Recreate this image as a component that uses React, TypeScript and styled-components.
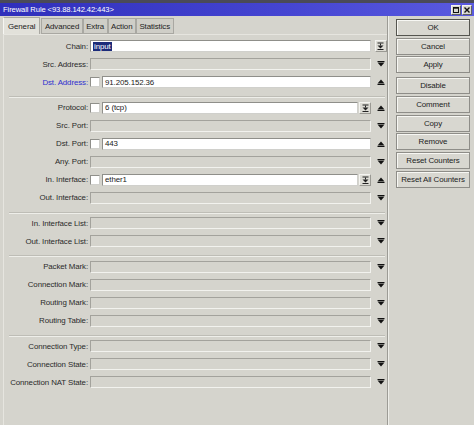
import React from "react";
import styled, { createGlobalStyle } from "styled-components";

const GlobalStyle = createGlobalStyle`
  html, body {
    margin: 0;
    padding: 0;
    background: #d5d4cd;
  }
  * { box-sizing: border-box; }
`;

const Window = styled.div`
  width: 474px;
  height: 425px;
  background: #d5d4cd;
  font-family: "Liberation Sans", Arial, sans-serif;
  font-size: 7.9px;
  letter-spacing: -0.1px;
  color: #222;
  display: flex;
  flex-direction: column;
  overflow: hidden;
`;

const TitleBar = styled.div`
  height: 16px;
  border-top: 3px solid #4a4a58;
  background: linear-gradient(to right, #2f2fbb, #4545d2 60%, #5a5ae0);
  display: flex;
  align-items: center;
  padding: 0 2px 0 3px;
`;

const TitleText = styled.div`
  color: #fff;
  font-size: 7.6px;
  flex: 1;
  white-space: nowrap;
`;

const TitleButtons = styled.div`
  display: flex;
  gap: 1px;
`;

const TitleBtn = styled.div`
  width: 10px;
  height: 10px;
  background: #d8d7d0;
  border: 1px solid #f4f4f0;
  border-right-color: #606060;
  border-bottom-color: #606060;
  display: flex;
  align-items: center;
  justify-content: center;
`;

const Body = styled.div`
  flex: 1;
  display: flex;
`;

const Main = styled.div`
  width: 387px;
  display: flex;
  flex-direction: column;
  padding: 1px 0 0 3px;
`;

const TabBar = styled.div`
  display: flex;
  height: 17px;
  align-items: flex-end;
`;

const Tab = styled.div<{ $active?: boolean }>`
  height: ${(p) => (p.$active ? "17px" : "16px")};
  padding: 0 ${(p) => (p.$active ? "4px" : "2.5px")};
  display: flex;
  align-items: center;
  background: ${(p) => (p.$active ? "#e2e1da" : "#cfcec7")};
  border: 1px solid #a9a8a2;
  border-bottom: ${(p) => (p.$active ? "none" : "1px solid #a9a8a2")};
  border-left-color: ${(p) => (p.$active ? "#f6f6f2" : "#a9a8a2")};
  margin-right: ${(p) => (p.$active ? "1px" : "0")};
  white-space: nowrap;
`;

const Panel = styled.div`
  flex: 1;
  border-left: 1px solid #e6e5df;
  border-top: 1px solid #e6e5df;
  padding-top: 2px;
`;

const Group = styled.div`
  display: flex;
  flex-direction: column;
`;

const Separator = styled.div`
  height: 7.5px;
  margin-left: 5px;
  margin-right: 2px;
  padding-top: 5px;
  &::after {
    content: "";
    display: block;
    border-top: 1px solid #bebdb6;
    border-bottom: 1px solid #eeeee9;
  }
`;

const Row = styled.div`
  height: 18px;
  display: grid;
  grid-template-columns: 84px 281px 15px;
  column-gap: 2px;
  align-items: center;
`;

const Label = styled.div<{ $blue?: boolean }>`
  text-align: right;
  white-space: nowrap;
  color: ${(p) => (p.$blue ? "#2f2fd0" : "#2a2a2a")};
`;

const Control = styled.div`
  display: flex;
  align-items: center;
  height: 12px;
  gap: 1px;
`;

const Field = styled.div<{ $enabled?: boolean }>`
  flex: 1;
  height: 12px;
  background: ${(p) => (p.$enabled ? "#ffffff" : "#d5d4cd")};
  border: 1px solid ${(p) => (p.$enabled ? "#8f8f8a" : "#a3a29c")};
  border-right-color: ${(p) => (p.$enabled ? "#d0d0cc" : "#f2f2ee")};
  border-bottom-color: ${(p) => (p.$enabled ? "#d0d0cc" : "#f2f2ee")};
  display: flex;
  align-items: center;
  padding-left: 2px;
  color: #1a1a1a;
  white-space: nowrap;
`;

const Selected = styled.span`
  background: #1c2c7a;
  color: #fff;
  padding: 0 1px;
  line-height: 9px;
`;

const Check = styled.div`
  width: 10px;
  height: 10px;
  margin-right: 1px;
  background: #fff;
  border: 1px solid #8f8f8a;
  border-right-color: #d0d0cc;
  border-bottom-color: #d0d0cc;
`;

const DropBtn = styled.div`
  width: 12px;
  height: 12px;
  background: #dddcd5;
  border: 1px solid #f4f4f0;
  border-right-color: #9a9993;
  border-bottom-color: #9a9993;
  display: flex;
  align-items: center;
  justify-content: center;
`;

const ArrowCell = styled.div`
  display: flex;
  align-items: center;
  justify-content: center;
  height: 12px;
`;

const Divider = styled.div`
  width: 2px;
  border-left: 1px solid #9c9b95;
  border-right: 1px solid #eeeee9;
`;

const Side = styled.div`
  flex: 1;
  display: flex;
  flex-direction: column;
  padding: 3px 4px 0 7px;
`;

const BtnGroup = styled.div`
  display: flex;
  flex-direction: column;
  gap: 1.7px;
  margin-bottom: 4px;
`;

const Button = styled.div<{ $default?: boolean }>`
  height: 17px;
  display: flex;
  align-items: center;
  justify-content: center;
  background: #d8d7d0;
  border: 1px solid ${(p) => (p.$default ? "#55554f" : "#8e8d88")};
  box-shadow: inset 1px 1px 0 #f7f7f3;
  white-space: nowrap;
`;

const DownArrow = () => (
  <svg width="8" height="6" viewBox="0 0 8 6">
    <rect x="0.5" y="0" width="7" height="1" fill="#111" />
    <path d="M0.5 1.5 H7.5 L4 5.5 Z" fill="#111" />
  </svg>
);

const UpArrow = () => (
  <svg width="8" height="6" viewBox="0 0 8 6">
    <path d="M0.5 4.5 H7.5 L4 0.5 Z" fill="#111" />
    <rect x="0.5" y="5" width="7" height="1" fill="#111" />
  </svg>
);

const ListIcon = () => (
  <svg width="7" height="8" viewBox="0 0 7 8">
    <rect x="0.5" y="0.5" width="6" height="1" fill="#222" />
    <rect x="3" y="1.5" width="1" height="2" fill="#222" />
    <path d="M0.5 3.5 H6.5 L3.5 6.5 Z" fill="#222" />
    <rect x="0.5" y="7" width="6" height="1" fill="#222" />
  </svg>
);

type RowDef = {
  label: string;
  value?: React.ReactNode;
  check?: boolean;
  list?: boolean;
  arrow?: "up" | "down" | "list";
  blue?: boolean;
};

const groups: RowDef[][] = [
  [
    { label: "Chain:", value: <Selected>input</Selected>, arrow: "list" },
    { label: "Src. Address:", arrow: "down" },
    { label: "Dst. Address:", value: "91.205.152.36", check: true, arrow: "up", blue: true },
  ],
  [
    { label: "Protocol:", value: "6 (tcp)", check: true, list: true, arrow: "up" },
    { label: "Src. Port:", arrow: "down" },
    { label: "Dst. Port:", value: "443", check: true, arrow: "up" },
    { label: "Any. Port:", arrow: "down" },
    { label: "In. Interface:", value: "ether1", check: true, list: true, arrow: "up" },
    { label: "Out. Interface:", arrow: "down" },
  ],
  [
    { label: "In. Interface List:", arrow: "down" },
    { label: "Out. Interface List:", arrow: "down" },
  ],
  [
    { label: "Packet Mark:", arrow: "down" },
    { label: "Connection Mark:", arrow: "down" },
    { label: "Routing Mark:", arrow: "down" },
    { label: "Routing Table:", arrow: "down" },
  ],
  [
    { label: "Connection Type:", arrow: "down" },
    { label: "Connection State:", arrow: "down" },
    { label: "Connection NAT State:", arrow: "down" },
  ],
];

const tabs = ["General", "Advanced", "Extra", "Action", "Statistics"];

const buttonGroups = [
  ["OK", "Cancel", "Apply"],
  ["Disable", "Comment", "Copy", "Remove", "Reset Counters", "Reset All Counters"],
];

function FormRow({ row }: { row: RowDef }) {
  return (
    <Row>
      <Label $blue={row.blue}>{row.label}</Label>
      <Control>
        {row.check && <Check />}
        <Field $enabled={row.value !== undefined}>{row.value}</Field>
        {row.list && (
          <DropBtn>
            <ListIcon />
          </DropBtn>
        )}
      </Control>
      <ArrowCell>
        {row.arrow === "down" && <DownArrow />}
        {row.arrow === "up" && <UpArrow />}
        {row.arrow === "list" && (
          <DropBtn>
            <ListIcon />
          </DropBtn>
        )}
      </ArrowCell>
    </Row>
  );
}

export default function App() {
  return (
    <>
      <GlobalStyle />
      <Window>
        <TitleBar>
          <TitleText>Firewall Rule &lt;93.88.142.42:443&gt;</TitleText>
          <TitleButtons>
            <TitleBtn>
              <svg width="6" height="6" viewBox="0 0 6 6">
                <rect x="0.5" y="0.5" width="5" height="5" fill="none" stroke="#111" />
                <rect x="0.5" y="0.5" width="5" height="1.2" fill="#111" />
              </svg>
            </TitleBtn>
            <TitleBtn>
              <svg width="6" height="6" viewBox="0 0 6 6">
                <path d="M0.5 0.5 L5.5 5.5 M5.5 0.5 L0.5 5.5" stroke="#111" strokeWidth="1.4" />
              </svg>
            </TitleBtn>
          </TitleButtons>
        </TitleBar>
        <Body>
          <Main>
            <TabBar>
              {tabs.map((t, i) => (
                <Tab key={t} $active={i === 0}>
                  {t}
                </Tab>
              ))}
            </TabBar>
            <Panel>
              {groups.map((g, gi) => (
                <React.Fragment key={gi}>
                  {gi > 0 && <Separator />}
                  <Group>
                    {g.map((r) => (
                      <FormRow key={r.label} row={r} />
                    ))}
                  </Group>
                </React.Fragment>
              ))}
            </Panel>
          </Main>
          <Divider />
          <Side>
            {buttonGroups.map((bg, i) => (
              <BtnGroup key={i}>
                {bg.map((b) => (
                  <Button key={b} $default={b === "OK"}>
                    {b}
                  </Button>
                ))}
              </BtnGroup>
            ))}
          </Side>
        </Body>
      </Window>
    </>
  );
}
